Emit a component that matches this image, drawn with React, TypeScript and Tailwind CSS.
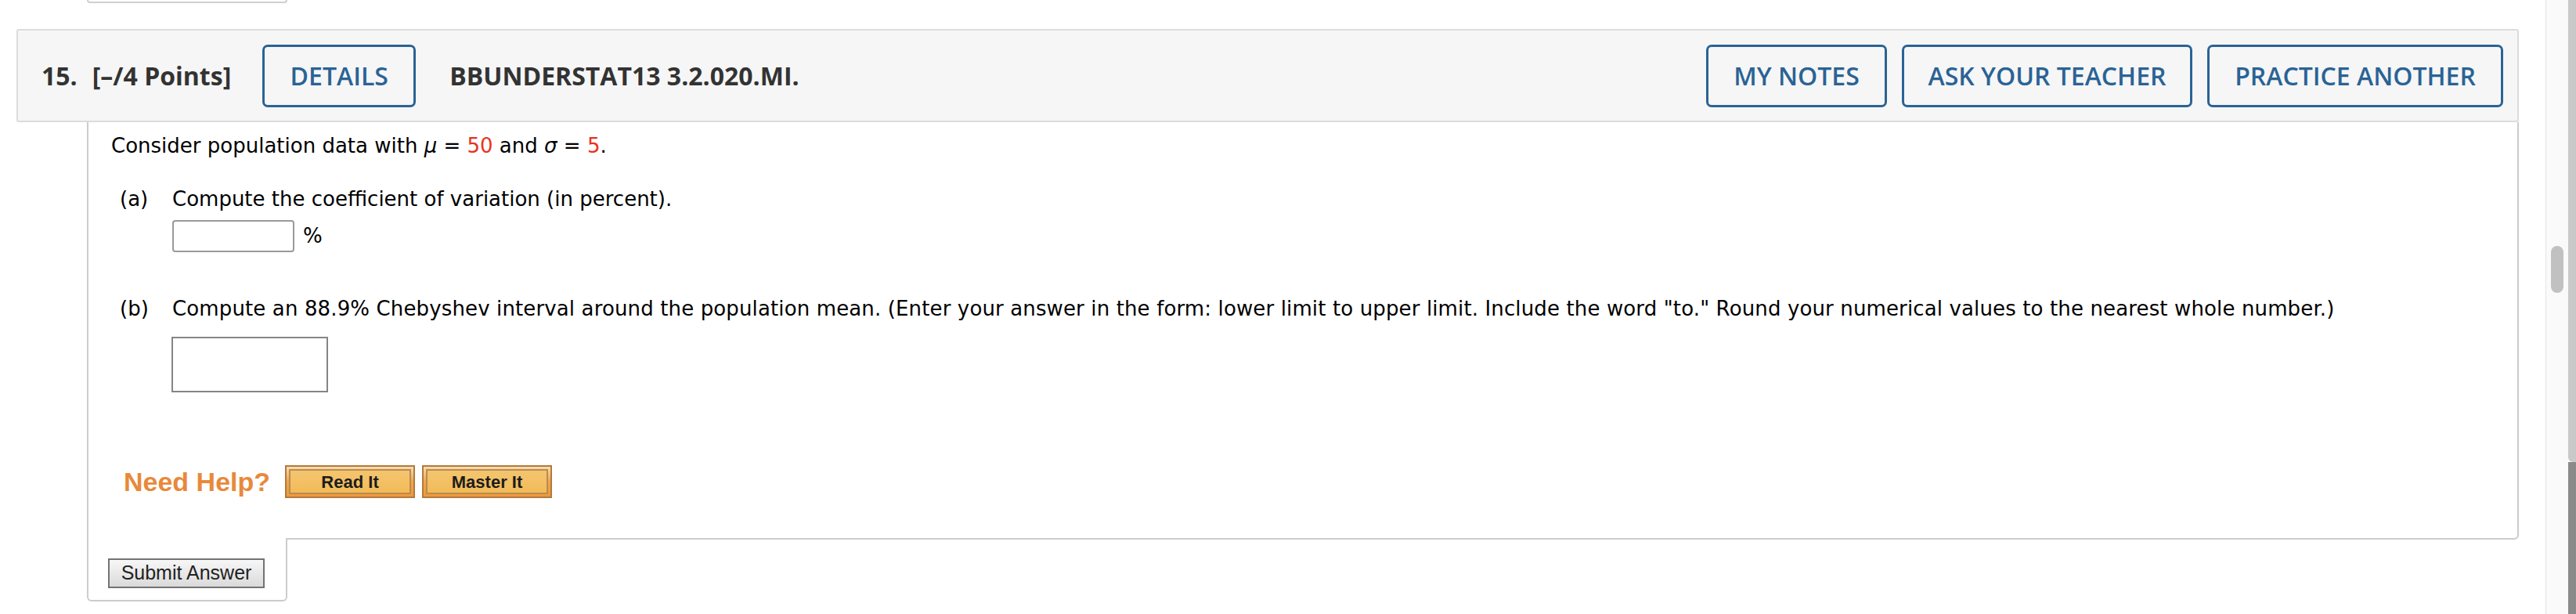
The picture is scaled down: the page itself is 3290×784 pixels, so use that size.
import React from "react";

const openSans = { fontFamily: '"Open Sans", "Liberation Sans", sans-serif' };

function HeaderButton({ label, w }: { label: string; w: string }) {
  return (
    <div
      className={`${w} h-[80px] flex items-center justify-center border-[3px] border-[#2a6395] rounded-[7px] text-[#2a6395] text-[32px] font-semibold shrink-0`}
      style={openSans}
    >
      {label}
    </div>
  );
}

function HelpButton({ label }: { label: string }) {
  return (
    <div className="w-[166px] h-[42px] border-2 border-[#b27a3d] bg-gradient-to-b from-[#f8dcae] via-[#f1a54c] to-[#ee993b] p-[3px] shrink-0">
      <div
        className="h-full w-full border-2 border-[#b98c52] bg-gradient-to-b from-[#f4c56f] to-[#f2bb58] flex items-center justify-center text-[22px] font-bold text-[#1c1c1c]"
        style={{ fontFamily: '"Liberation Sans", Arial, sans-serif' }}
      >
        {label}
      </div>
    </div>
  );
}

export default function App() {
  const qFont = { fontFamily: '"DejaVu Sans", Verdana, sans-serif' };
  return (
    <div className="w-[3290px] h-[784px] bg-white flex overflow-hidden">
      {/* main column */}
      <div className="w-[3251px] flex flex-col">
        {/* previous question's tab (partial) */}
        <div className="ml-[111px] w-[256px] h-[4px] border-l-2 border-r-2 border-b-2 border-[#cfcfcf] rounded-b-[6px]" />

        {/* header */}
        <div className="mt-[33px] ml-[21px] w-[3196px] h-[119px] border-2 border-[#dcdcdc] bg-[#f6f6f6] rounded-[3px] flex items-center pl-[30px] pr-[18px]">
          <div className="flex items-center text-[32px] font-bold text-[#333]" style={openSans}>
            <span>15.</span>
            <span className="ml-[19px]">[–/4 Points]</span>
          </div>
          <div className="ml-[40px]">
            <HeaderButton label="DETAILS" w="w-[196px]" />
          </div>
          <div className="ml-[43px] text-[32px] font-bold text-[#333]" style={openSans}>
            BBUNDERSTAT13 3.2.020.MI.
          </div>
          <div className="ml-auto flex items-center gap-[19px]">
            <HeaderButton label="MY NOTES" w="w-[231px]" />
            <HeaderButton label="ASK YOUR TEACHER" w="w-[371px]" />
            <HeaderButton label="PRACTICE ANOTHER" w="w-[378px]" />
          </div>
        </div>

        {/* content box */}
        <div
          className="ml-[111px] w-[3106px] h-[533px] border-l-2 border-r-2 border-b-2 border-[#cccccc] rounded-br-[6px] flex flex-col text-[26px] leading-[31px] text-black"
          style={qFont}
        >
          <p className="mt-[15px] ml-[29px]">
            Consider population data with <i>μ</i> = <span className="text-[#e8331c]">50</span> and{" "}
            <i>σ</i> = <span className="text-[#e8331c]">5</span>.
          </p>

          <div className="mt-[37px] ml-[40px] flex">
            <span className="w-[67px] shrink-0">(a)</span>
            <span>Compute the coefficient of variation (in percent).</span>
          </div>
          <div className="mt-[11px] ml-[107px] flex items-center">
            <div className="w-[156px] h-[41px] border-2 border-[#9a9a9a] rounded-[4px] bg-white" />
            <span className="ml-[11px]">%</span>
          </div>

          <div className="mt-[57px] ml-[40px] flex">
            <span className="w-[67px] shrink-0">(b)</span>
            <span className="whitespace-nowrap tracking-[0.13px]">
              Compute an 88.9% Chebyshev interval around the population mean. (Enter your answer in the form: lower
              limit to upper limit. Include the word "to." Round your numerical values to the nearest whole number.)
            </span>
          </div>
          <div className="mt-[20px] ml-[106px] w-[200px] h-[71px] border-2 border-[#858585] bg-white" />

          <div className="mt-[93px] ml-[45px] flex items-center">
            <span
              className="text-[34px] leading-[42px] font-bold text-[#e8893a] mr-[19px]"
              style={{ fontFamily: '"Liberation Sans", Arial, sans-serif' }}
            >
              Need Help?
            </span>
            <HelpButton label="Read It" />
            <div className="w-[9px]" />
            <HelpButton label="Master It" />
          </div>
        </div>

        {/* submit tab */}
        <div className="relative -mt-[2px] ml-[111px] w-[256px] h-[81px] bg-white border-l-2 border-r-2 border-b-2 border-[#cccccc] rounded-b-[6px] pl-[25px] pt-[26px]">
          <div
            className="w-[200px] h-[38px] border-2 border-[#737373] bg-gradient-to-b from-[#f7f7f7] to-[#dadada] flex items-center justify-center text-[25px] text-[#222]"
            style={{ fontFamily: '"Liberation Sans", Arial, sans-serif' }}
          >
            Submit Answer
          </div>
        </div>
      </div>

      {/* scrollbar */}
      <div className="w-[29px] h-full border-l border-[#e4e4e4] bg-[#fafafa] pt-[314px]">
        <div className="ml-[6px] w-[16px] h-[60px] rounded-full bg-[#c1c1c1]" />
      </div>
      <div className="w-[10px] h-full flex flex-col">
        <div className="h-[590px] bg-[#c9c9c9] rounded-bl-[6px]" />
        <div className="flex-1 bg-[#8a8a8a]" />
      </div>
    </div>
  );
}
